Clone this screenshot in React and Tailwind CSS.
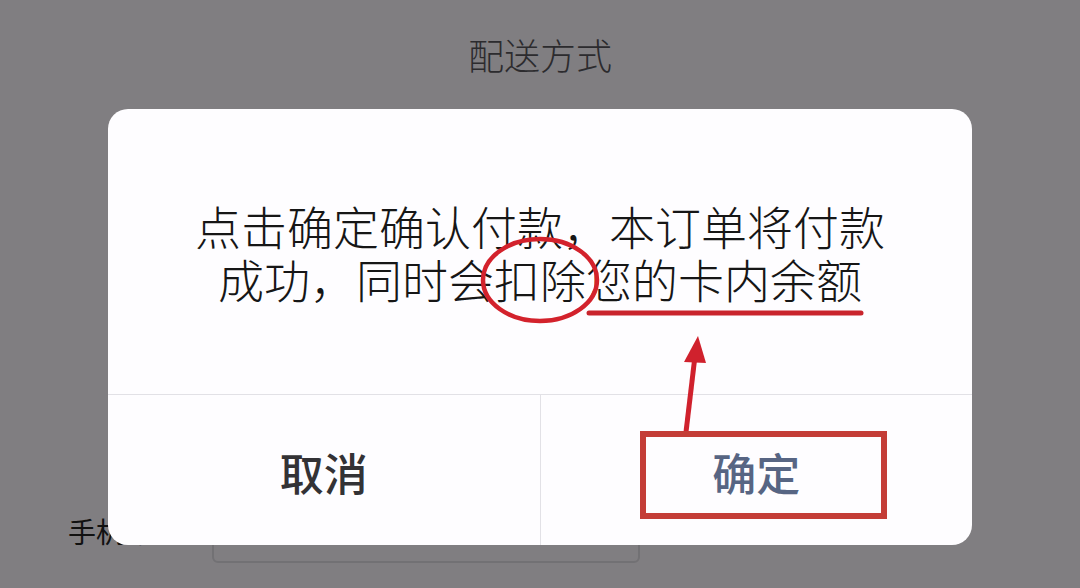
export default function App() {
  const font = { fontFamily: '"Noto Sans CJK SC", "Noto Sans", sans-serif' };
  return (
    <div
      className="relative w-[1080px] h-[588px] overflow-hidden bg-[#807e81] flex flex-col"
      style={font}
    >
      {/* page behind the mask */}
      <div className="pt-[33px] text-center text-[36px] leading-[42px] font-light text-[#2c2b2e]">
        配送方式
      </div>
      <div className="flex-1" />
      <div className="flex items-center pl-[68px] pb-[25px]">
        <span className="w-[144px] text-[28px] leading-[34px] text-[#111]">手机号</span>
        <div className="w-[428px] h-[64px] rounded-md border-2 border-[#727174]" />
      </div>

      {/* confirmation dialog */}
      <div className="absolute left-[108px] top-[109px] w-[864px] h-[436px] rounded-[20px] bg-[#fefdff] flex flex-col">
        <div className="h-[286px] flex items-center justify-center border-b border-[#e2e1e6]">
          <p className="text-center text-[46px] leading-[53px] font-light text-[#161616]">
            点击确定确认付款，本订单将付款
            <br />
            成功，同时会扣除您的卡内余额
          </p>
        </div>
        <div className="flex-1 flex">
          <div className="flex-1 flex items-center justify-center text-[44px] font-medium text-[#333235] border-r border-[#e2e1e6] pt-[4px]">
            取消
          </div>
          <div className="flex-1 flex items-center justify-center text-[44px] font-medium text-[#576583] pt-[4px]">
            确定
          </div>
        </div>
      </div>

      {/* red markup drawn on top */}
      <svg
        className="absolute inset-0 pointer-events-none"
        width="1080"
        height="588"
        viewBox="0 0 1080 588"
      >
        <ellipse cx="540" cy="280" rx="57" ry="41" fill="none" stroke="#d3222c" strokeWidth="4.5" />
        <line x1="589" y1="313" x2="861" y2="313" stroke="#c9242c" strokeWidth="5" strokeLinecap="round" />
        <line x1="686" y1="432" x2="695" y2="356" stroke="#d0212d" strokeWidth="5" />
        <polygon points="698,336 684,362 706,363" fill="#d0212d" />
        <rect x="643" y="434" width="241" height="82" fill="none" stroke="#c43d37" strokeWidth="6" />
      </svg>
    </div>
  );
}
